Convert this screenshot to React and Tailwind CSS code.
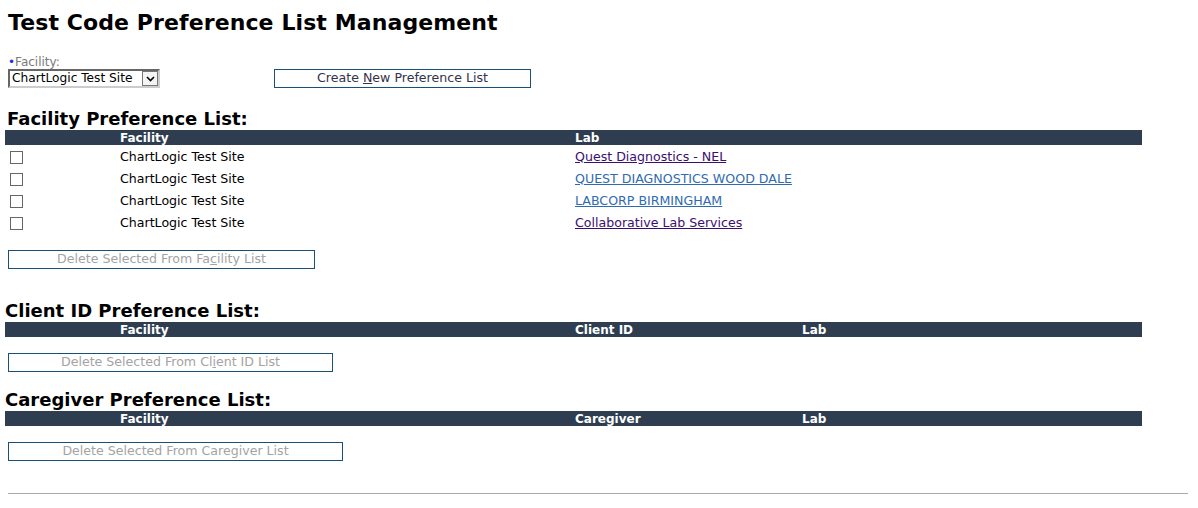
import React from "react";

const font = { fontFamily: '"DejaVu Sans", Verdana, sans-serif' };

const facilityRows = [
  { lab: "Quest Diagnostics - NEL", visited: true },
  { lab: "QUEST DIAGNOSTICS WOOD DALE", visited: false },
  { lab: "LABCORP BIRMINGHAM", visited: false },
  { lab: "Collaborative Lab Services", visited: true },
];

function Button({ children, className }) {
  return (
    <div
      className={
        "h-[19px] border border-[#19507a] bg-white flex items-center justify-center text-[12.6px] leading-none whitespace-nowrap " +
        className
      }
    >
      {children}
    </div>
  );
}

function HeadBar({ cols }) {
  return (
    <div className="ml-[5px] w-[1137px] h-[15px] bg-[#2e3e50] flex items-center text-white font-bold text-[12px] leading-none">
      {cols.map((c) => (
        <div key={c.label} className={c.w}>
          {c.label}
        </div>
      ))}
    </div>
  );
}

export default function App() {
  return (
    <div className="bg-white w-[1198px] h-[508px] text-black" style={font}>
      <h1 className="pl-[8px] pt-[10px] text-[22px] font-bold leading-[26px] tracking-[0.1px]">
        Test Code Preference List Management
      </h1>

      <div className="flex items-end mt-[19px]">
        <div className="pl-[8px] w-[274px]">
          <div className="text-[12px] leading-[14px] text-[#7a7a7a]">
            <span className="text-[#2233dd]">•</span>Facility:
          </div>
          <div className="w-[152px] h-[19px] border-2 border-[#666] border-r-[#ccc] border-b-[#ccc] flex items-center text-[12.2px] leading-none">
            <span className="pl-[2px] flex-1 whitespace-nowrap">ChartLogic Test Site</span>
            <span className="w-[16px] h-[15px] border border-[#777] bg-[#f4f4f4] flex items-center justify-center shrink-0">
              <svg width="9" height="6" viewBox="0 0 9 6">
                <path d="M1 1 L4.5 4.5 L8 1" stroke="#000" strokeWidth="1.6" fill="none" />
              </svg>
            </span>
          </div>
        </div>
        <Button className="w-[257px] text-[#33334a]">
          Create&nbsp;<span className="underline">N</span>ew Preference List
        </Button>
      </div>

      <h2 className="pl-[7px] mt-[20px] text-[18px] font-bold leading-[22px]">Facility Preference List:</h2>
      <HeadBar
        cols={[
          { label: "", w: "w-[115px]" },
          { label: "Facility", w: "w-[455px]" },
          { label: "Lab", w: "flex-1" },
        ]}
      />
      <div className="ml-[5px] pt-[1px]">
        {facilityRows.map((r) => (
          <div key={r.lab} className="flex items-center h-[22px] text-[12.6px]">
            <div className="w-[115px] pl-[5px]">
              <span className="block w-[13px] h-[13px] border border-[#666] bg-white" />
            </div>
            <div className="w-[455px]">ChartLogic Test Site</div>
            <a
              href="#"
              className={"underline " + (r.visited ? "text-[#3b0f70]" : "text-[#2f6bb0]")}
            >
              {r.lab}
            </a>
          </div>
        ))}
      </div>
      <Button className="ml-[8px] mt-[16px] w-[307px] text-[#a3a3a3]">
        Delete Selected From Fa<span className="underline">c</span>ility List
      </Button>

      <h2 className="pl-[5px] mt-[31px] text-[18px] font-bold leading-[22px]">Client ID Preference List:</h2>
      <HeadBar
        cols={[
          { label: "", w: "w-[115px]" },
          { label: "Facility", w: "w-[455px]" },
          { label: "Client ID", w: "w-[227px]" },
          { label: "Lab", w: "flex-1" },
        ]}
      />
      <Button className="ml-[8px] mt-[16px] w-[325px] text-[#a3a3a3]">
        Delete Selected From Cl<span className="underline">i</span>ent ID List
      </Button>

      <h2 className="pl-[5px] mt-[17px] text-[18px] font-bold leading-[22px]">Caregiver Preference List:</h2>
      <HeadBar
        cols={[
          { label: "", w: "w-[115px]" },
          { label: "Facility", w: "w-[455px]" },
          { label: "Caregiver", w: "w-[227px]" },
          { label: "Lab", w: "flex-1" },
        ]}
      />
      <Button className="ml-[8px] mt-[16px] w-[335px] text-[#a3a3a3]">
        Delete Selected From Caregiver List
      </Button>

      <hr className="ml-[8px] mt-[32px] w-[1180px] border-t border-[#aaa]" />
    </div>
  );
}
